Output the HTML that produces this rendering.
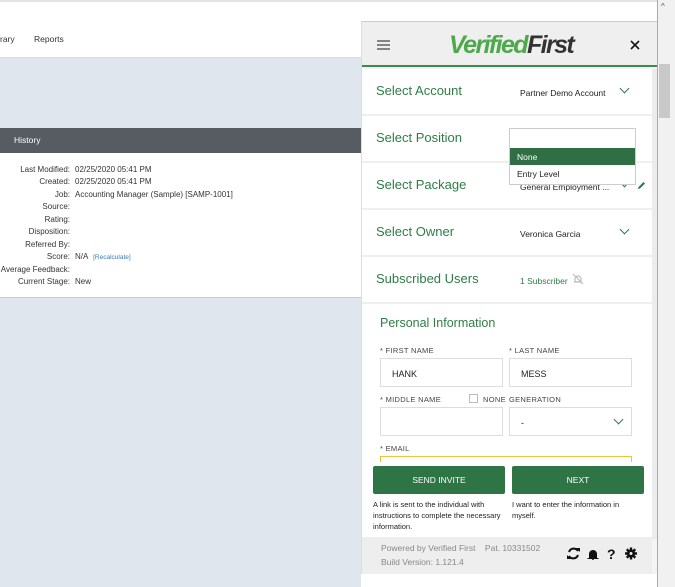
<!DOCTYPE html>
<html><head><meta charset="utf-8"><style>
*{box-sizing:border-box;margin:0;padding:0}
body{width:675px;height:587px;position:relative;overflow:hidden;background:#fff;font-family:"Liberation Sans",sans-serif;}
.a{position:absolute}
.lbl{font-size:8px;color:#333;text-align:right;width:70px;left:0}
.val{font-size:8px;color:#333;left:75px}
.row{position:absolute;left:362px;width:290px;height:47px;background:#fff;border-bottom:2px solid #eef0f0}
.rt{position:absolute;left:14px;top:14px;font-size:13px;color:#2e7d46}
.rv{position:absolute;left:158px;top:19px;font-size:8.5px;color:#222}
.chev{position:absolute;width:7px;height:7px;border-right:1.6px solid #2e7d46;border-bottom:1.6px solid #2e7d46;transform:rotate(45deg)}
.fl{position:absolute;font-size:7.5px;color:#444;letter-spacing:.3px}
.inp{position:absolute;border:1px solid #ddd;background:#fff;height:29px;font-size:9px;color:#222;padding:10px 0 0 11px}
.btn{position:absolute;top:466px;width:132px;height:28px;background:#2f7445;border-radius:2px;color:#fff;font-size:8.5px;text-align:center;line-height:28px}
.note{position:absolute;top:499px;font-size:7.5px;color:#222;line-height:11px}
</style></head><body>
<div class="a" style="left:0;top:0;width:657px;height:2px;background:#e4e4e4"></div>
<div class="a" style="left:0;top:34px;font-size:8.5px;color:#333">rary</div>
<div class="a" style="left:34px;top:34px;font-size:8.5px;color:#333">Reports</div>
<div class="a" style="left:0;top:57px;width:361px;height:530px;background:#dfe6ed;border-top:1px solid #d4dbe2"></div>
<div class="a" style="left:0;top:128px;width:361px;height:25px;background:#575b62;color:#fff;font-size:8.5px;padding:7px 0 0 14px">History</div>
<div class="a" style="left:0;top:153px;width:361px;height:145px;background:#fff;border-bottom:1px solid #ccc"></div>
<div class="a lbl" style="top:165px">Last Modified:</div><div class="a val" style="top:165px">02/25/2020 05:41 PM</div>
<div class="a lbl" style="top:177px">Created:</div><div class="a val" style="top:177px">02/25/2020 05:41 PM</div>
<div class="a lbl" style="top:190px">Job:</div><div class="a val" style="top:190px">Accounting Manager (Sample) [SAMP-1001]</div>
<div class="a lbl" style="top:202px">Source:</div>
<div class="a lbl" style="top:215px">Rating:</div>
<div class="a lbl" style="top:227px">Disposition:</div>
<div class="a lbl" style="top:240px">Referred By:</div>
<div class="a lbl" style="top:252px">Score:</div><div class="a val" style="top:252px">N/A <span style="font-size:6.5px;color:#3a7bbf;margin-left:3px">[Recalculate]</span></div>
<div class="a lbl" style="top:265px">Average Feedback:</div>
<div class="a lbl" style="top:277px">Current Stage:</div><div class="a val" style="top:277px">New</div>

<div class="a" style="left:361px;top:21px;width:296px;height:566px;background:#fff"></div>
<div class="a" style="left:361px;top:21px;width:296px;height:553px;background:#f4f4f4;border-left:1px solid #ddd;border-top:1px solid #ccc"></div>
<div class="a" style="left:362px;top:22px;width:295px;height:45px;background:#efefef;border-bottom:2px solid #3d8a4e"></div>
<svg class="a" style="left:377px;top:40px" width="13" height="10"><path d="M0 1H13M0 5H13M0 9H13" stroke="#444" stroke-width="1.2"/></svg>
<div class="a" style="left:449px;top:31px;font-size:25px;font-weight:bold;font-style:italic;letter-spacing:-1.6px"><span style="color:#4ea94b">Verified</span><span style="color:#333">First</span></div>
<svg class="a" style="left:630px;top:40px" width="10" height="10"><path d="M1 1L9 9M9 1L1 9" stroke="#111" stroke-width="1.6"/></svg>
<div class="a" style="left:652px;top:69px;width:5px;height:470px;background:#ececec"></div>

<div class="row" style="top:69px"><div class="rt">Select Account</div><div class="rv">Partner Demo Account</div><div class="chev" style="left:259px;top:16px"></div></div>
<div class="row" style="top:116px"><div class="rt">Select Position</div></div>
<div class="row" style="top:163px"><div class="rt">Select Package</div><div class="rv" style="top:19px">General Employment ...</div><div class="chev" style="left:259px;top:16px"></div>
<svg style="position:absolute;left:275px;top:18px" width="9" height="9"><path d="M1 8L1.5 6L6.5 1L8 2.5L3 7.5Z" fill="#2e7d46"/></svg></div>
<div class="row" style="top:210px"><div class="rt">Select Owner</div><div class="rv">Veronica Garcia</div><div class="chev" style="left:259px;top:16px"></div></div>
<div class="row" style="top:257px"><div class="rt">Subscribed Users</div><div class="rv" style="color:#2e7d46">1 Subscriber</div>
<svg style="position:absolute;left:210px;top:16px" width="12" height="12"><path d="M3 9V6a3 3 0 016 0v3H2M1 1L11 11" stroke="#bbb" stroke-width="1.2" fill="none"/></svg></div>

<div class="a" style="left:509px;top:128px;width:127px;height:57px;background:#fff;border:1px solid #ccc"></div>
<div class="a" style="left:510px;top:148px;width:125px;height:17px;background:#2f6f43;color:#fff;font-size:8.5px;padding:4px 0 0 7px">None</div>
<div class="a" style="left:517px;top:169px;font-size:8.5px;color:#222">Entry Level</div>

<div class="a" style="left:362px;top:304px;width:290px;height:233px;background:#fff"></div>
<div class="a" style="left:380px;top:316px;font-size:12.5px;color:#2e7d46">Personal Information</div>
<div class="fl" style="left:380px;top:346px">* FIRST NAME</div>
<div class="fl" style="left:509px;top:346px">* LAST NAME</div>
<div class="inp" style="left:380px;top:358px;width:123px">HANK</div>
<div class="inp" style="left:509px;top:358px;width:123px">MESS</div>
<div class="fl" style="left:380px;top:395px">* MIDDLE NAME</div>
<div class="a" style="left:469px;top:394px;width:9px;height:9px;border:1px solid #bbb"></div>
<div class="fl" style="left:483px;top:395px">NONE</div>
<div class="fl" style="left:509px;top:395px">GENERATION</div>
<div class="inp" style="left:380px;top:407px;width:123px"></div>
<div class="inp" style="left:509px;top:407px;width:123px">-</div>
<div class="chev" style="left:615px;top:416px"></div>
<div class="fl" style="left:380px;top:444px">* EMAIL</div>
<div class="a" style="left:380px;top:456px;width:252px;height:6px;border:1.5px solid #f1c232;border-bottom:none"></div>
<div class="btn" style="left:373px">SEND INVITE</div>
<div class="btn" style="left:512px">NEXT</div>
<div class="note" style="left:373px">A link is sent to the individual with<br>instructions to complete the necessary<br>information.</div>
<div class="note" style="left:512px">I want to enter the information in<br>myself.</div>

<div class="a" style="left:362px;top:537px;width:290px;height:37px;background:#eeeeee"></div>
<div class="a" style="left:381px;top:543px;font-size:8.5px;color:#888">Powered by Verified First&nbsp;&nbsp;&nbsp; Pat. 10331502</div>
<div class="a" style="left:381px;top:557px;font-size:8.5px;color:#888">Build Version: 1.121.4</div>
<svg class="a" style="left:567px;top:547px" width="72" height="13">
<path d="M2 5a5 5 0 019-1M11 8a5 5 0 01-9 1" stroke="#111" stroke-width="2" fill="none"/><path d="M9 1h4v4zM4 12H0V8z" fill="#111"/>
<path d="M22 11V7a4 4 0 018 0v4h1.5v1h-11v-1zM25 12a1 1 0 002 0z" fill="#111"/>
<text x="40" y="12" font-family="Liberation Sans" font-weight="bold" font-size="14" fill="#111">?</text>
<g transform="translate(64 6.5)"><circle r="4" fill="#111"/><path d="M-1.2-6h2.4v12h-2.4zM-6-1.2h12v2.4h-12z" fill="#111"/><path d="M-1.2-6h2.4v12h-2.4zM-6-1.2h12v2.4h-12z" fill="#111" transform="rotate(45)"/><circle r="1.5" fill="#eee"/></g>
</svg>

<div class="a" style="left:657px;top:0;width:18px;height:587px;background:#f1f1f1;border-left:1px solid #aaa"></div>
<div class="a" style="left:659px;top:64px;width:11px;height:54px;background:#c8c8c8"></div>
<div class="a" style="left:661px;top:2px;font-size:8px;color:#555">^</div>
</body></html>
